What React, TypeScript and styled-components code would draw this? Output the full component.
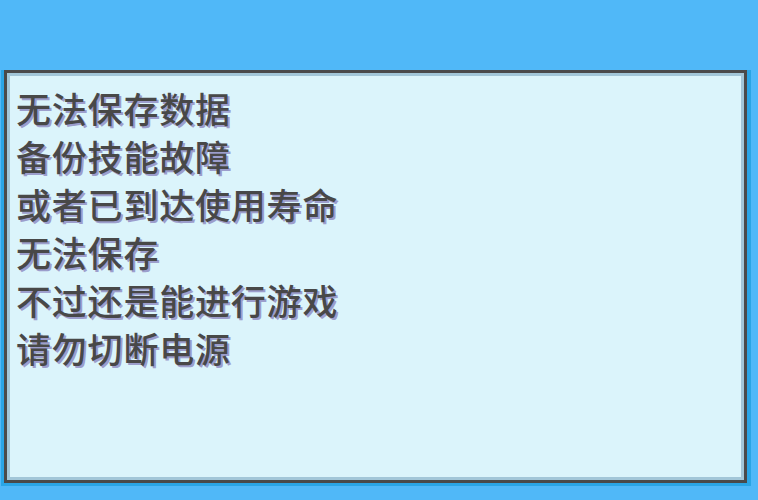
import * as React from "react";
import styled, { createGlobalStyle } from "styled-components";

const SKY = "#50b8f8";
const SKY_DARK = "#2aa5e6";
const FRAME = "#4a4a4a";
const FRAME_INNER = "#a2c6d8";
const PANEL = "#dbf4fb";
const TEXT = "#484848";
const TEXT_SHADOW = "#9c9ecc";

const lines = [
  "无法保存数据",
  "备份技能故障",
  "或者已到达使用寿命",
  "无法保存",
  "不过还是能进行游戏",
  "请勿切断电源",
];

const GlobalStyle = createGlobalStyle`
  html, body {
    margin: 0;
    padding: 0;
    background: ${SKY};
    width: 758px;
    height: 500px;
    overflow: hidden;
  }
`;

const Screen = styled.div`
  width: 758px;
  height: 500px;
  padding-top: 68px;
  padding-left: 1px;
  box-sizing: border-box;
`;

const Shadow = styled.div`
  width: 750px;
  box-sizing: border-box;
  border-left: 3px solid ${SKY_DARK};
  border-right: 4px solid ${SKY_DARK};
  border-bottom: 3px solid ${SKY_DARK};
`;

const Box = styled.div`
  margin-top: 2px;
  height: 413px;
  box-sizing: border-box;
  border: 3px solid ${FRAME};
  background: ${FRAME_INNER};
  padding: 3px;
`;

const Panel = styled.div`
  height: 100%;
  box-sizing: border-box;
  background: ${PANEL};
  padding: 8px 0 0 6px;
  display: flex;
  flex-direction: column;
`;

const Line = styled.div`
  font-family: "Noto Sans CJK SC", "Noto Sans", sans-serif;
  font-size: 35px;
  font-weight: 500;
  line-height: 48px;
  height: 48px;
  color: ${TEXT};
  text-shadow: 2px 2px 0 ${TEXT_SHADOW};
  letter-spacing: 0.8px;
  white-space: nowrap;
`;

export default function App() {
  return (
    <>
      <GlobalStyle />
      <Screen>
        <Shadow>
          <Box>
            <Panel>
              {lines.map((line, i) => (
                <Line key={i}>{line}</Line>
              ))}
            </Panel>
          </Box>
        </Shadow>
      </Screen>
    </>
  );
}
